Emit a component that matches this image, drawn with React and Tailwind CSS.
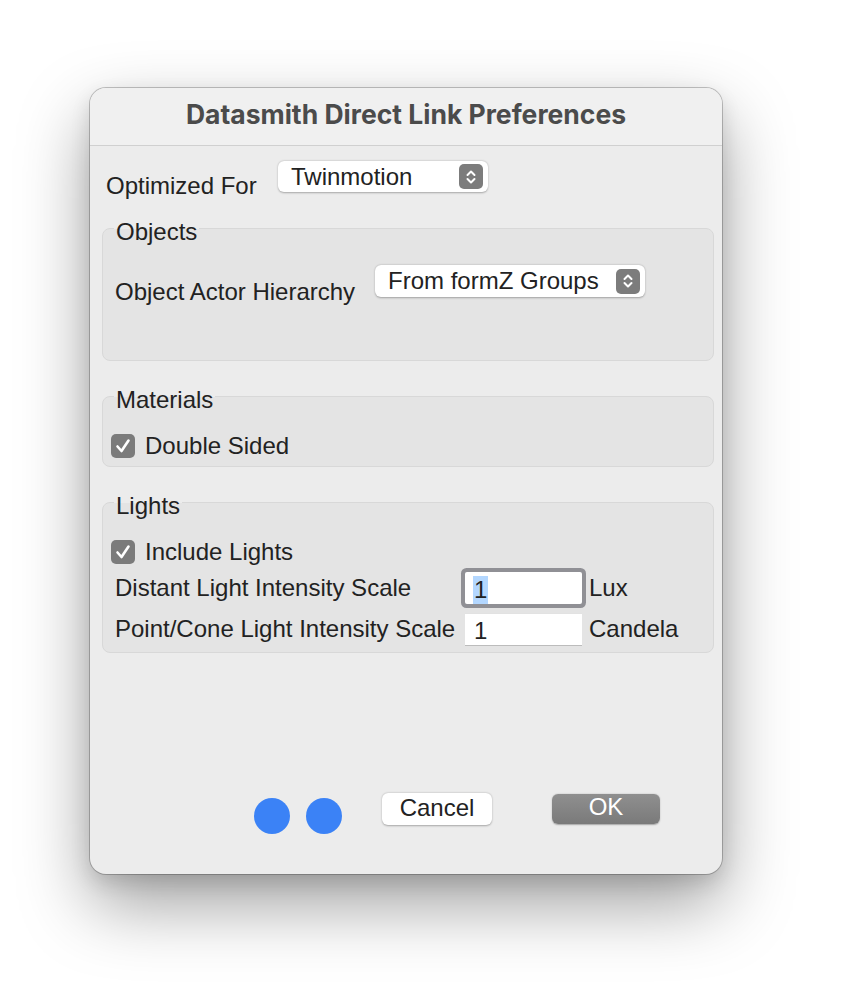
import React from 'react';

const Chevrons = () => (
  <svg width="14" height="20" viewBox="0 0 14 20" fill="none" stroke="white" strokeWidth="2" strokeLinecap="round" strokeLinejoin="round">
    <polyline points="3.5,8 7,4.5 10.5,8" />
    <polyline points="3.5,12 7,15.5 10.5,12" />
  </svg>
);

const Check = () => (
  <div className="w-[24px] h-[24px] rounded-[5px] bg-[#7b7b7b] flex items-center justify-center shrink-0">
    <svg width="18" height="18" viewBox="0 0 18 18" fill="none" stroke="white" strokeWidth="2.6" strokeLinecap="round" strokeLinejoin="round">
      <polyline points="3.5,9.5 7.5,14 14.5,3.5" />
    </svg>
  </div>
);

const Legend = ({ children }) => (
  <div className="-mt-[9px] ml-[11px] px-[2px] w-fit leading-[24px] bg-[linear-gradient(to_bottom,#ececec_9px,transparent_9px)]">
    {children}
  </div>
);

const DatasmithPrefs = () => {
  return (
    <div className="min-h-[998px] bg-white pt-[88px] pl-[90px] font-['Liberation_Sans',Arial,sans-serif] text-[24px] text-[#222]">
      <div className="w-[632px] h-[786px] rounded-[16px] bg-[#ececec] overflow-hidden flex flex-col shadow-[0_0_0_1px_rgba(0,0,0,0.22),0_30px_70px_rgba(0,0,0,0.38),0_8px_20px_rgba(0,0,0,0.12)]">

        {/* title bar */}
        <div className="h-[58px] shrink-0 bg-[#f0f0f0] border-b border-[#d0d0d0] flex items-center justify-center">
          <span className="font-['Inter',sans-serif] font-bold text-[26.5px] text-[#4b4b4b] -mt-[3px]">
            Datasmith Direct Link Preferences
          </span>
        </div>

        {/* Optimized For */}
        <div className="mt-[15px] ml-[16px] h-[31px] flex leading-[28px]">
          <div className="w-[172px] pt-[11px]">Optimized For</div>
          <div className="w-[210px] h-[31px] bg-white rounded-[6px] shadow-[0_0.5px_2px_rgba(0,0,0,0.3)] flex items-center justify-between pl-[13px] pr-[5px]">
            <span>Twinmotion</span>
            <div className="w-[24px] h-[25px] rounded-[5px] bg-[#7c7c7c] flex items-center justify-center">
              <Chevrons />
            </div>
          </div>
        </div>

        {/* Objects */}
        <div className="mt-[36px] ml-[12px] w-[612px] h-[133px] rounded-[8px] border border-[#d8d8d8] bg-[#e4e4e4] flex flex-col">
          <Legend>Objects</Legend>
          <div className="mt-[21px] ml-[12px] flex leading-[28px]">
            <div className="w-[260px] pt-[13px]">Object Actor Hierarchy</div>
            <div className="w-[270px] h-[32px] bg-white rounded-[6px] shadow-[0_0.5px_2px_rgba(0,0,0,0.3)] flex items-center justify-between pl-[13px] pr-[5px]">
              <span>From formZ Groups</span>
              <div className="w-[24px] h-[25px] rounded-[5px] bg-[#7c7c7c] flex items-center justify-center">
                <Chevrons />
              </div>
            </div>
          </div>
        </div>

        {/* Materials */}
        <div className="mt-[35px] ml-[12px] w-[612px] h-[71px] rounded-[8px] border border-[#d8d8d8] bg-[#e4e4e4] flex flex-col">
          <Legend>Materials</Legend>
          <div className="mt-[20px] ml-[8px] h-[28px] flex items-center gap-[10px] leading-[28px]">
            <Check />
            <span>Double Sided</span>
          </div>
        </div>

        {/* Lights */}
        <div className="mt-[35px] ml-[12px] w-[612px] h-[151px] rounded-[8px] border border-[#d8d8d8] bg-[#e4e4e4] flex flex-col">
          <Legend>Lights</Legend>
          <div className="mt-[20px] ml-[8px] h-[28px] flex items-center gap-[10px] leading-[28px]">
            <Check />
            <span>Include Lights</span>
          </div>
          <div className="mt-[6px] ml-[12px] h-[32px] flex items-center leading-[28px]">
            <div className="w-[350px]">Distant Light Intensity Scale</div>
            <div className="w-[117px] h-[32px] bg-white rounded-[2px] ring-4 ring-[#909095] flex items-center pl-[8px] pt-[3px]">
              <span className="bg-[#b3d7ff] px-[1px]">1</span>
            </div>
            <div className="ml-[7px]">Lux</div>
          </div>
          <div className="mt-[9px] ml-[12px] h-[32px] flex items-center leading-[28px]">
            <div className="w-[350px]">Point/Cone Light Intensity Scale</div>
            <div className="w-[117px] h-[32px] bg-white shadow-[inset_0_1px_0_#e2e2e2,0_1px_0_#bcbcbc] flex items-center pl-[9px] pt-[3px]">
              1
            </div>
            <div className="ml-[7px]">Candela</div>
          </div>
        </div>

        {/* buttons */}
        <div className="mt-[140px] flex items-start">
          <div className="ml-[164px] mt-[5px] w-[36px] h-[36px] rounded-full bg-[#3b82f6]" />
          <div className="ml-[16px] mt-[5px] w-[36px] h-[36px] rounded-full bg-[#3b82f6]" />
          <button className="ml-[40px] w-[110px] h-[32px] rounded-[6px] bg-white shadow-[0_0.5px_2px_rgba(0,0,0,0.3)] leading-[28px] pb-[3px]">
            Cancel
          </button>
          <button className="ml-[60px] mt-[1px] w-[108px] h-[30px] rounded-[6px] bg-[linear-gradient(to_bottom,#8f8f8f,#7a7a7a)] text-white leading-[26px] pb-[4px] shadow-[0_0.5px_1.5px_rgba(0,0,0,0.3)]">
            OK
          </button>
        </div>

      </div>
    </div>
  );
};

export default DatasmithPrefs;
